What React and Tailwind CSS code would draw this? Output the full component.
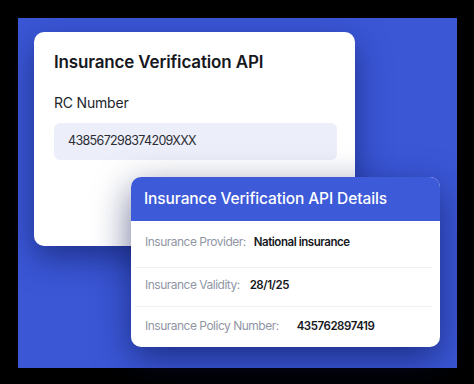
export default function App() {
  return (
    <div className="w-[474px] h-[384px] bg-black overflow-hidden" style={{ fontFamily: 'Inter, "Liberation Sans", sans-serif' }}>
      <div className="relative ml-[18px] mt-[18px] w-[439px] h-[350px] bg-[#3b57d6] pt-[14px] pl-[16px]">
        {/* Request card */}
        <div className="w-[321px] h-[214px] rounded-[10px] bg-white pl-[20px] pr-[18px] pt-[19px] shadow-[0_12px_32px_rgba(10,20,80,0.55)]">
          <h1 className="text-[17px] leading-[22px] font-semibold text-[#16181d] tracking-[-0.15px]">Insurance Verification API</h1>
          <p className="mt-[21px] text-[14px] leading-[18px] text-[#22252b] tracking-[-0.2px]">RC Number</p>
          <div className="mt-[11px] h-[37px] rounded-[6px] bg-[#eceef9] pl-[14px] flex items-center text-[12.5px] tracking-[-0.65px] text-[#2a2d33]">
            438567298374209XXX
          </div>
        </div>

        {/* Details card */}
        <div className="absolute left-[113px] top-[159px] w-[309px] h-[170px] rounded-[10px] bg-white shadow-[0_12px_36px_rgba(10,20,80,0.6)] overflow-hidden">
          <div className="h-[44px] bg-[#3d5ad8] pl-[13px] flex items-center text-[15.5px] font-medium text-white tracking-[-0.1px]">
            Insurance Verification API Details
          </div>
          <div>
            <div className="h-[46px] pt-[12px] pl-[14px] flex items-baseline">
              <span className="text-[12px] tracking-[-0.5px] text-[#9096a4]">Insurance Provider:</span>
              <span className="ml-[8px] text-[11.5px] tracking-[-0.45px] font-semibold text-[#16181d]">National insurance</span>
            </div>
            <div className="ml-[4px] mr-[8px] h-px bg-[#f0f1f4]" />
            <div className="h-[38px] pt-[8px] pl-[14px] flex items-baseline">
              <span className="text-[12px] tracking-[-0.5px] text-[#9096a4]">Insurance Validity:</span>
              <span className="ml-[10px] text-[11.5px] tracking-[-0.45px] font-semibold text-[#16181d]">28/1/25</span>
            </div>
            <div className="ml-[4px] mr-[8px] h-px bg-[#f0f1f4]" />
            <div className="pt-[10px] pl-[14px] flex items-baseline">
              <span className="text-[12px] tracking-[-0.5px] text-[#9096a4]">Insurance Policy Number:</span>
              <span className="ml-[18px] text-[11.5px] tracking-[-0.45px] font-semibold text-[#16181d]">435762897419</span>
            </div>
          </div>
        </div>
      </div>
    </div>
  )
}
